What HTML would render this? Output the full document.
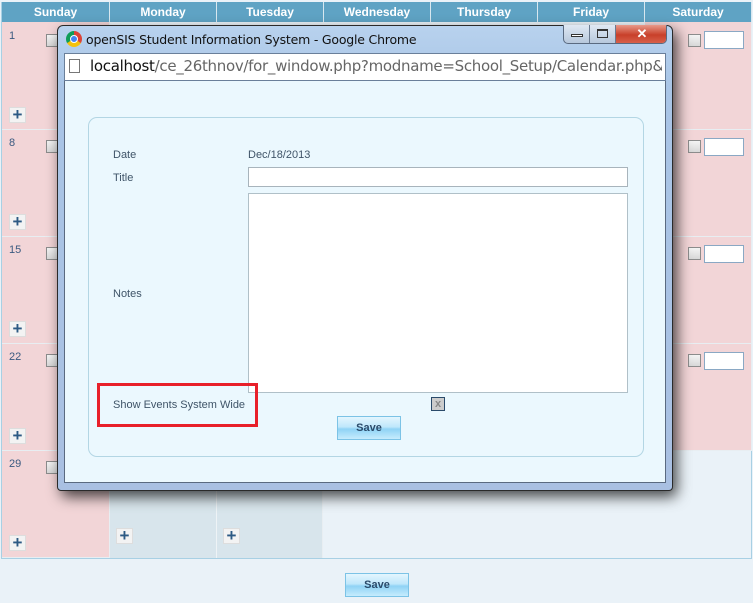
<!DOCTYPE html>
<html><head><style>
*{box-sizing:border-box;margin:0;padding:0}
body{width:753px;height:603px;background:#eaf2f8;font-family:"Liberation Sans",Arial,sans-serif;position:relative;overflow:hidden}
.a{position:absolute}
.hd{top:2px;height:20px;background:#5fa3c4;color:#fff;font-weight:bold;font-size:12px;text-align:center;line-height:20px;border-right:1px solid #d8e8f0}
.cell{border-right:1px solid #e8eef2;border-bottom:1px solid #e8eef2}
.pk{background:#f2d5d7}
.num{font-size:11px;color:#3a5a80}
.cb{width:13px;height:13px;border:1px solid #8c8c8c;background:linear-gradient(#f4f4f4,#d8d8d8)}
.plus{width:17px;height:16px;background:#f3f3f3;border:1px solid #ddd;color:#2d5a84;font-weight:bold;font-size:17px;line-height:14px;text-align:center}
.inp{width:40px;height:18px;background:#fff;border:1px solid #8aa8c4}
.btn{background:linear-gradient(#e4f6fe 0%,#bfe7fb 45%,#8fd3f5 55%,#c6ecfd 100%);border:1px solid #7cc3e6;color:#2a4a6a;font-weight:bold;font-size:11px;text-align:center}
.lbl{font-size:11px;color:#3f5468}
</style></head><body>
<div class="a" style="left:1px;top:2px;width:751px;height:557px;border:1px solid #a8d0e4;border-top:none"></div>
<div class="a hd" style="left:2px;width:108px">Sunday</div>
<div class="a hd" style="left:110px;width:107px">Monday</div>
<div class="a hd" style="left:217px;width:107px">Tuesday</div>
<div class="a hd" style="left:324px;width:107px">Wednesday</div>
<div class="a hd" style="left:431px;width:107px">Thursday</div>
<div class="a hd" style="left:538px;width:107px">Friday</div>
<div class="a hd" style="left:645px;width:107px">Saturday</div>

<div class="a cell pk" style="left:2px;top:22px;width:108px;height:108px"></div>
<div class="a cell pk" style="left:2px;top:130px;width:108px;height:107px"></div>
<div class="a cell pk" style="left:2px;top:237px;width:108px;height:107px"></div>
<div class="a cell pk" style="left:2px;top:344px;width:108px;height:107px"></div>
<div class="a cell pk" style="left:2px;top:451px;width:108px;height:107px"></div>
<div class="a cell pk" style="left:645px;top:22px;width:107px;height:108px"></div>
<div class="a cell pk" style="left:645px;top:130px;width:107px;height:107px"></div>
<div class="a cell pk" style="left:645px;top:237px;width:107px;height:107px"></div>
<div class="a cell pk" style="left:645px;top:344px;width:107px;height:107px"></div>
<div class="a" style="left:110px;top:451px;width:213px;height:107px;background:#d8e5ec;border-right:1px solid #e8eef2"></div>
<div class="a" style="left:216px;top:451px;width:1px;height:107px;background:#eef3f6"></div>

<div class="a num" style="left:9px;top:30px">1</div>
<div class="a num" style="left:9px;top:137px">8</div>
<div class="a num" style="left:9px;top:244px">15</div>
<div class="a num" style="left:9px;top:351px">22</div>
<div class="a num" style="left:9px;top:458px">29</div>
<div class="a cb" style="left:46px;top:34px"></div>
<div class="a cb" style="left:46px;top:140px"></div>
<div class="a cb" style="left:46px;top:247px"></div>
<div class="a cb" style="left:46px;top:354px"></div>
<div class="a cb" style="left:46px;top:461px"></div>
<div class="a plus" style="left:9px;top:107px">+</div>
<div class="a plus" style="left:9px;top:214px">+</div>
<div class="a plus" style="left:9px;top:321px">+</div>
<div class="a plus" style="left:9px;top:428px">+</div>
<div class="a plus" style="left:9px;top:535px">+</div>
<div class="a plus" style="left:116px;top:528px">+</div>
<div class="a plus" style="left:223px;top:528px">+</div>
<div class="a cb" style="left:688px;top:34px"></div>
<div class="a inp" style="left:704px;top:31px"></div>
<div class="a cb" style="left:688px;top:140px"></div>
<div class="a inp" style="left:704px;top:138px"></div>
<div class="a cb" style="left:688px;top:247px"></div>
<div class="a inp" style="left:704px;top:245px"></div>
<div class="a cb" style="left:688px;top:354px"></div>
<div class="a inp" style="left:704px;top:352px"></div>
<div class="a btn" style="left:345px;top:573px;width:64px;height:24px;line-height:22px">Save</div>

<div class="a" style="left:57px;top:25px;width:616px;height:466px;border-radius:6px;box-shadow:4px 6px 14px rgba(0,0,0,.7)"></div>
<div class="a" style="left:57px;top:25px;width:616px;height:466px;border:1px solid #2a2a2a;border-radius:6px 6px 4px 4px;background:linear-gradient(#b8d2ee,#a9c5e6 60px,#a9c0e2)"></div>
<div class="a" style="left:66px;top:31px;width:16px;height:16px;border-radius:50%;background:conic-gradient(#db4437 0 120deg,#f4c20d 120deg 240deg,#0f9d58 240deg 360deg)"><div style="margin:4px;width:8px;height:8px;border-radius:50%;background:#4285f4;border:1px solid #fff"></div></div>
<div class="a" style="left:86px;top:32px;font-size:12.5px;color:#111;font-family:'DejaVu Sans',sans-serif;letter-spacing:-0.2px">openSIS Student Information System - Google Chrome</div>
<div class="a" style="left:563px;top:25px;width:104px;height:19px;border:1px solid #5a6a80;border-top:none;border-radius:0 0 5px 5px;overflow:hidden;background:linear-gradient(#dfe8f3,#b7c8dc)">
<div class="a" style="left:0;top:0;width:26px;height:18px;border-right:1px solid #6a7a90"><div style="margin:9px 7px 0;width:12px;height:3px;border:1px solid #333;background:#fff"></div></div>
<div class="a" style="left:26px;top:0;width:26px;height:18px;border-right:1px solid #6a7a90"><div style="margin:4px 7px 0;width:11px;height:9px;border:1px solid #333;border-top-width:2px"></div></div>
<div class="a" style="left:52px;top:0;width:52px;height:18px;background:linear-gradient(#e89a8a,#c8402a 55%,#d8604a);color:#fff;font-weight:bold;font-size:13px;text-align:center;line-height:17px">✕</div>
</div>
<div class="a" style="left:64px;top:53px;width:602px;height:28px;background:#fff;border:1px solid #6a7f9a"></div>
<div class="a" style="left:69px;top:59px;width:11px;height:14px;border:1px solid #777;background:#fff"></div>
<div class="a" style="left:90px;top:57px;font-size:15px;color:#666;white-space:nowrap;font-family:'DejaVu Sans',sans-serif;letter-spacing:-0.3px;width:572px;overflow:hidden"><span style="color:#111">localhost</span>/ce_26thnov/for_window.php?modname=School_Setup/Calendar.php&amp;m</div>
<div class="a" style="left:64px;top:81px;width:602px;height:402px;background:#ebf8fe;border:1px solid #5a6a80;border-top:none"></div>
<div class="a" style="left:88px;top:117px;width:556px;height:340px;border:1px solid #b3d6e4;border-radius:9px"></div>
<div class="a lbl" style="left:113px;top:149px">Date</div>
<div class="a lbl" style="left:248px;top:149px">Dec/18/2013</div>
<div class="a lbl" style="left:113px;top:172px">Title</div>
<div class="a" style="left:248px;top:167px;width:380px;height:20px;background:#fff;border:1px solid #a8b4bc"></div>
<div class="a" style="left:248px;top:193px;width:380px;height:200px;background:#fff;border:1px solid #b0c0c8"></div>
<div class="a lbl" style="left:113px;top:288px">Notes</div>
<div class="a lbl" style="left:113px;top:399px">Show Events System Wide</div>
<div class="a" style="left:97px;top:383px;width:161px;height:44px;border:3px solid #e8202a"></div>
<div class="a" style="left:431px;top:397px;width:14px;height:14px;border:1px solid #2a4a6a;background:#ccc;color:#888;font-size:11px;font-weight:bold;text-align:center;line-height:12px">x</div>
<div class="a btn" style="left:337px;top:416px;width:64px;height:24px;line-height:22px">Save</div>
</body></html>
